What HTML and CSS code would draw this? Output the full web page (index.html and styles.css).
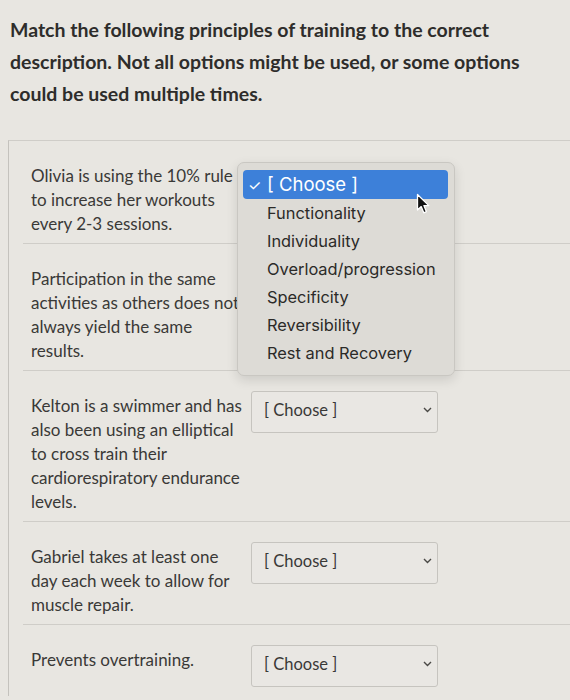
FILE: index.html
```html
<!DOCTYPE html>
<html lang="en">
<head>
  <meta charset="UTF-8">
  <meta name="viewport" content="width=device-width, initial-scale=1.0">
  <title>Principles of Training</title>
  <link rel="stylesheet" href="styles.css">
</head>
<body>
  <div class="question">
    <p class="prompt">Match the following principles of training to the correct description. Not all options might be used, or some options could be used multiple times.</p>

    <div class="answers">
      <div class="row">
        <div class="desc">Olivia is using the 10% rule to increase her workouts every 2-3 sessions.</div>
        <div class="pick">
          <div class="select open">
            <span>[ Choose ]</span>
            <svg class="chev" width="9" height="6" viewBox="0 0 9 6"><path d="M1 1 4.5 4.5 8 1" fill="none" stroke="#4a4946" stroke-width="1.4"/></svg>
          </div>

          <!-- open dropdown list -->
          <ul class="menu">
            <li class="active"><span class="tick">&#10003;</span>[ Choose ]</li>
            <li>Functionality</li>
            <li>Individuality</li>
            <li>Overload/progression</li>
            <li>Specificity</li>
            <li>Reversibility</li>
            <li>Rest and Recovery</li>
          </ul>

          <svg class="cursor" width="16" height="22" viewBox="0 0 16 22">
            <path d="M1.5 1.5 L1.5 17 L5.2 13.6 L7.8 19.8 L10.4 18.7 L7.9 12.6 L12.8 12.6 Z" fill="#111" stroke="#fff" stroke-width="1.3" stroke-linejoin="round"/>
          </svg>
        </div>
      </div>

      <div class="row">
        <div class="desc">Participation in the same activities as others does not always yield the same results.</div>
        <div class="pick"></div>
      </div>

      <div class="row">
        <div class="desc">Kelton is a swimmer and has also been using an elliptical to cross train their cardiorespiratory endurance levels.</div>
        <div class="pick">
          <div class="select">
            <span>[ Choose ]</span>
            <svg class="chev" width="9" height="6" viewBox="0 0 9 6"><path d="M1 1 4.5 4.5 8 1" fill="none" stroke="#4a4946" stroke-width="1.4"/></svg>
          </div>
        </div>
      </div>

      <div class="row">
        <div class="desc">Gabriel takes at least one day each week to allow for muscle repair.</div>
        <div class="pick">
          <div class="select">
            <span>[ Choose ]</span>
            <svg class="chev" width="9" height="6" viewBox="0 0 9 6"><path d="M1 1 4.5 4.5 8 1" fill="none" stroke="#4a4946" stroke-width="1.4"/></svg>
          </div>
        </div>
      </div>

      <div class="row last">
        <div class="desc">Prevents overtraining.</div>
        <div class="pick">
          <div class="select">
            <span>[ Choose ]</span>
            <svg class="chev" width="9" height="6" viewBox="0 0 9 6"><path d="M1 1 4.5 4.5 8 1" fill="none" stroke="#4a4946" stroke-width="1.4"/></svg>
          </div>
        </div>
      </div>
    </div>
  </div>
</body>
</html>
```

FILE: styles.css
```css
/* General Styles */
body {
  margin: 0;
  height: 700px;
  background: #e8e6e1;
  color: #333230;
  font-family: 'Lato', 'Open Sans', sans-serif;
  overflow: hidden;
}

.question {
  padding: 14px 0 0 0;
}

.prompt {
  margin: 0 0 30px 10px;
  max-width: 530px;
  font-size: 19.5px;
  font-weight: bold;
  line-height: 32px;
  color: #2e2d2b;
}

/* Answer box */
.answers {
  margin-left: 8px;
  border-top: 1px solid #cfcdc8;
  border-left: 1px solid #c4c2bd;
  min-height: 555px;
}

.row {
  display: flex;
  align-items: flex-start;
  margin-left: 14px;
  padding: 23px 0 7px 0;
  border-bottom: 1px solid #cfcdc8;
}

.row.last {
  border-bottom: none;
}

.desc {
  width: 212px;
  padding-left: 8px;
  margin-right: 8px;
  font-size: 17px;
  line-height: 24px;
  color: #3a3937;
}

.pick {
  position: relative;
  margin-top: -3px;
}

.select {
  width: 187px;
  height: 42px;
  box-sizing: border-box;
  padding: 0 5px 0 12px;
  display: flex;
  align-items: center;
  justify-content: space-between;
  border: 1px solid #c6c4bf;
  border-radius: 3px;
  background: #e9e7e3;
  font-size: 16.5px;
  color: #3a3937;
}

/* the list is open over this one */
.select.open {
  visibility: hidden;
}

.select span {
  margin-top: -4px;
}

.chev {
  margin-top: -4px;
}

/* Dropdown list */
.menu {
  position: absolute;
  top: 1px;
  left: -14px;
  width: 218px;
  margin: 0;
  padding: 7px 6px 8px 5px;
  box-sizing: border-box;
  list-style: none;
  background: #dddbd6;
  border: 1px solid #c9c7c2;
  border-radius: 7px;
  box-shadow: 0 4px 12px rgba(0, 0, 0, 0.12);
  font-family: 'Inter', 'Liberation Sans', sans-serif;
  font-size: 16.4px;
  color: #2b2a28;
}

.menu li {
  height: 28px;
  line-height: 28px;
  padding-left: 24px;
  border-radius: 4px;
}

.menu li.active {
  height: 29px;
  line-height: 29px;
  padding-left: 5px;
  background: #3d80d9;
  color: #fff;
  font-size: 18.5px;
}

.tick {
  display: inline-block;
  width: 19px;
  font-size: 15px;
}

.cursor {
  position: absolute;
  top: 32px;
  left: 165px;
}
```
